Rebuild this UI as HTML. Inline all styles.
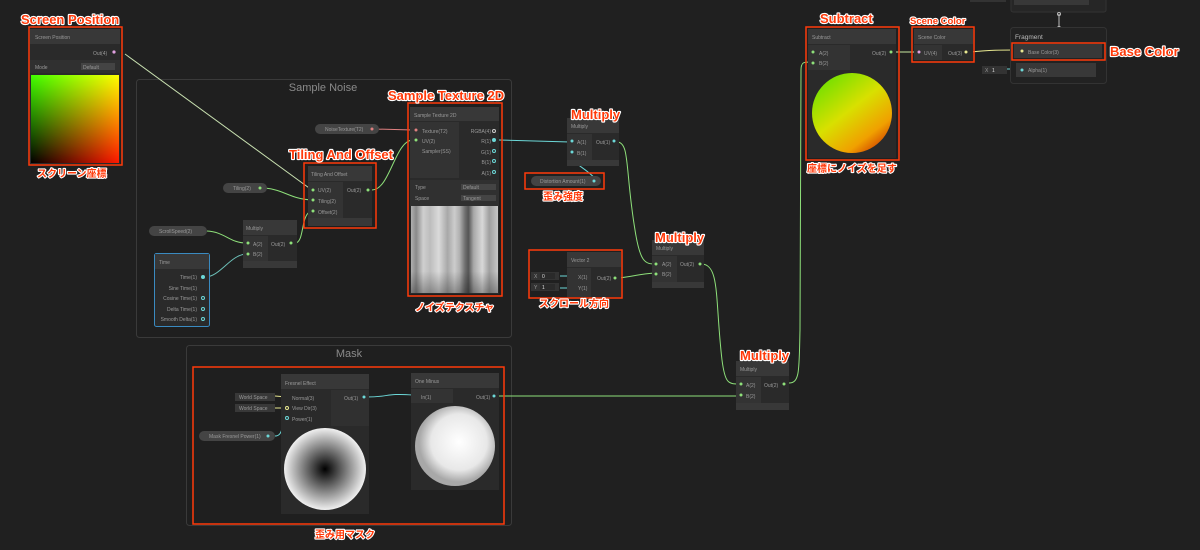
<!DOCTYPE html>
<html><head><meta charset="utf-8"><style>
html,body{margin:0;padding:0;background:#202020;}
svg{display:block}
.t{font-family:"Liberation Sans",sans-serif;font-size:5px;fill:#9a9a9a}
.h{font-family:"Liberation Sans",sans-serif;font-size:5.5px;fill:#aaaaaa}
.lab{font-family:"Liberation Sans","Noto Sans CJK JP",sans-serif;font-weight:bold;fill:#ff3a0a;stroke:#ffffff;stroke-width:2.2px;paint-order:stroke;stroke-linejoin:round}
.g{font-family:"Liberation Sans",sans-serif;font-size:11px;fill:#8a8a8a}
</style></head><body>
<svg width="1200" height="550" viewBox="0 0 1200 550" xmlns="http://www.w3.org/2000/svg">
<defs>
<linearGradient id="spR" x1="0" y1="0" x2="1" y2="0"><stop offset="0" stop-color="#000"/><stop offset="1" stop-color="#ff1800"/></linearGradient>
<linearGradient id="spG" x1="0" y1="0" x2="0" y2="1"><stop offset="0" stop-color="#40ff00"/><stop offset="1" stop-color="#000"/></linearGradient>
<linearGradient id="sub" x1="0.1" y1="0.1" x2="0.8" y2="1"><stop offset="0" stop-color="#70e000"/><stop offset="0.45" stop-color="#d8e000"/><stop offset="0.8" stop-color="#f0a000"/><stop offset="1" stop-color="#d04000"/></linearGradient>
<radialGradient id="fr"><stop offset="0" stop-color="#000"/><stop offset="1" stop-color="#f0f0f0"/></radialGradient>
<radialGradient id="om" cx="0.55" cy="0.45"><stop offset="0" stop-color="#ffffff"/><stop offset="0.7" stop-color="#e8e8e8"/><stop offset="1" stop-color="#a8a8a8"/></radialGradient>
<linearGradient id="nz" x1="0" y1="0" x2="1" y2="0">
<stop offset="0" stop-color="#b0b0b0"/><stop offset="0.06" stop-color="#8a8a8a"/><stop offset="0.14" stop-color="#cfcfcf"/><stop offset="0.22" stop-color="#bdbdbd"/><stop offset="0.32" stop-color="#dadada"/><stop offset="0.42" stop-color="#a8a8a8"/><stop offset="0.5" stop-color="#cccccc"/><stop offset="0.56" stop-color="#b0b0b0"/><stop offset="0.62" stop-color="#707070"/><stop offset="0.66" stop-color="#555"/><stop offset="0.72" stop-color="#a8a8a8"/><stop offset="0.82" stop-color="#d8d8d8"/><stop offset="0.9" stop-color="#a0a0a0"/><stop offset="1" stop-color="#c8c8c8"/></linearGradient>
<linearGradient id="nzv" x1="0" y1="0" x2="0" y2="1"><stop offset="0.75" stop-color="#000" stop-opacity="0"/><stop offset="1" stop-color="#000" stop-opacity="0.3"/></linearGradient>
<linearGradient id="wp" x1="0" x2="1"><stop offset="0" stop-color="#e8b8e8"/><stop offset="1" stop-color="#e8e8b0"/></linearGradient>
</defs>

<!-- groups -->
<rect x="136.5" y="79.5" width="375" height="258" rx="3" fill="#1f1f1f" stroke="#3a3a3a"/>
<text x="323" y="91" class="g" text-anchor="middle">Sample Noise</text>
<rect x="186.5" y="345.5" width="325" height="180" rx="3" fill="#1f1f1f" stroke="#3a3a3a"/>
<text x="349" y="357" class="g" text-anchor="middle">Mask</text>

<!-- top-right partial node -->
<rect x="1011" y="-5" width="95" height="17" rx="2" fill="#262626" stroke="#333"/>
<rect x="1014" y="-3" width="75" height="8" fill="#383838"/>
<rect x="970" y="-3" width="36" height="5" fill="#333"/>
<line x1="1059" y1="14" x2="1059" y2="28" stroke="#bbb" stroke-width="1"/>
<circle cx="1059" cy="14" r="1.5" fill="none" stroke="#bbb"/><circle cx="1059" cy="28" r="1.5" fill="none" stroke="#bbb"/>

<!-- wires -->
<g fill="none" stroke-width="1">
<path d="M118 52 L914 52" stroke="url(#wp)"/>
<path d="M125 54 L305 185 L312 190" stroke="#c8e0b0"/>
<path d="M265 188 C285 190 290 199 312 200" stroke="#8ee07a"/>
<path d="M207 231 C225 232 230 243 246 243" stroke="#8ee07a"/>
<path d="M205 277 C220 277 230 255 246 254" stroke="#6cc0b8"/>
<path d="M295 243 C305 243 300 213 312 211" stroke="#8ee07a"/>
<path d="M372 190 C390 190 395 140 413 140" stroke="#8ee07a"/>
<path d="M374 129 L413 130" stroke="#e08080"/>
<path d="M499 140 L570 142" stroke="#6cd8d8"/>
<path d="M596 180 C590 170 565 160 570 152" stroke="#6cd8d8"/>
<path d="M617 142 C630 142 625 170 635 230 C640 262 645 264 655 264" stroke="#8ee07a"/>
<path d="M619 278 C635 276 640 274 655 273" stroke="#8ee07a"/>
<path d="M702 264 C720 265 715 300 722 360 C725 383 728 384 739 384" stroke="#8ee07a"/>
<path d="M497 396 L739 396" stroke="#8ee07a"/>
<path d="M366 397 C390 397 385 393 413 395" stroke="#6cd8d8"/>
<path d="M789 383 C800 383 799 370 800 330 L801 70 C801 62 804 62 810 62" stroke="#8ee07a"/>
<path d="M894 52 L914 52" stroke="#c8e8a0"/>
<path d="M971 52 C990 50 1000 50 1016 50" stroke="#e8e890"/>
<path d="M1003 69 L1016 69" stroke="#6cd8d8"/>
<path d="M275 396 L287 397 M275 408 L287 408" stroke="#e8e890"/>
<path d="M275 436 C285 436 280 420 287 418" stroke="#6cd8d8"/>
<path d="M560 276 L570 276 M560 288 L570 288" stroke="#6cd8d8"/>
</g>

<!-- Screen Position -->
<rect x="30" y="29" width="90" height="135" fill="#2a2a2a"/>
<rect x="30" y="29" width="90" height="15" fill="#383838"/>
<text x="35" y="39" class="t">Screen Position</text>
<text x="93" y="55" class="t">Out(4)</text><circle cx="114" cy="52" r="1.6" fill="#e0a0e0"/>
<rect x="30" y="60" width="90" height="13" fill="#303030"/>
<text x="35" y="69" class="t">Mode</text><rect x="81" y="63" width="34" height="7" fill="#444"/><text x="83" y="69" class="t">Default</text>
<rect x="31" y="75" width="88" height="88" fill="url(#spR)"/><rect x="31" y="75" width="88" height="88" fill="url(#spG)" style="mix-blend-mode:screen"/>

<!-- pills -->
<g class="t">
<rect x="315" y="124" width="64" height="10" rx="5" fill="#444"/><text x="325" y="131">NoiseTexture(T2)</text><circle cx="372" cy="129" r="1.5" fill="#e08080"/>
<rect x="223" y="183" width="44" height="10" rx="5" fill="#444"/><text x="233" y="190">Tiling(2)</text><circle cx="260" cy="188" r="1.5" fill="#8ee07a"/>
<rect x="149" y="226" width="58" height="10" rx="5" fill="#444"/><text x="159" y="233">ScrollSpeed(2)</text>
<rect x="531" y="176" width="70" height="10" rx="5" fill="#444"/><text x="540" y="183">Distortion Amount(1)</text><circle cx="594" cy="181" r="1.5" fill="#6cd8d8"/>
<rect x="199" y="431" width="76" height="10" rx="5" fill="#444"/><text x="209" y="438">Mask Fresnel Power(1)</text><circle cx="268" cy="436" r="1.5" fill="#6cd8d8"/>
</g>

<!-- Tiling And Offset -->
<rect x="308" y="166" width="64" height="60" fill="#2a2a2a"/>
<rect x="308" y="166" width="64" height="15" fill="#383838"/>
<text x="311" y="176" class="t">Tiling And Offset</text>
<rect x="308" y="182" width="35" height="36" fill="#333"/>
<text x="318" y="192" class="t">UV(2)</text><text x="318" y="203" class="t">Tiling(2)</text><text x="318" y="214" class="t">Offset(2)</text>
<circle cx="313" cy="190" r="1.5" fill="#8ee07a"/><circle cx="313" cy="200" r="1.5" fill="#8ee07a"/><circle cx="313" cy="211" r="1.5" fill="#8ee07a"/>
<text x="347" y="192" class="t">Out(2)</text><circle cx="368" cy="190" r="1.5" fill="#8ee07a"/>
<rect x="308" y="218" width="64" height="8" fill="#383838"/>

<!-- Multiply small -->
<rect x="243" y="220" width="54" height="48" fill="#2a2a2a"/>
<rect x="243" y="220" width="54" height="15" fill="#383838"/><text x="246" y="230" class="t">Multiply</text>
<rect x="243" y="236" width="25" height="25" fill="#333"/>
<text x="253" y="246" class="t">A(2)</text><text x="253" y="256" class="t">B(2)</text>
<circle cx="248" cy="243" r="1.5" fill="#8ee07a"/><circle cx="248" cy="254" r="1.5" fill="#8ee07a"/>
<text x="271" y="246" class="t">Out(2)</text><circle cx="291" cy="243" r="1.5" fill="#8ee07a"/>
<rect x="243" y="261" width="54" height="7" fill="#383838"/>

<!-- Time -->
<rect x="154.5" y="253.5" width="55" height="73" rx="2" fill="#2a2a2a" stroke="#3a8ac0"/>
<rect x="155" y="254" width="54" height="15" fill="#383838"/><text x="159" y="264" class="t">Time</text>
<g class="t" text-anchor="end"><text x="197" y="279">Time(1)</text><text x="197" y="290">Sine Time(1)</text><text x="197" y="300">Cosine Time(1)</text><text x="197" y="311">Delta Time(1)</text><text x="197" y="321">Smooth Delta(1)</text></g>
<g fill="none" stroke="#6cd8d8"><circle cx="203" cy="277" r="1.5" fill="#6cd8d8"/><circle cx="203" cy="298" r="1.5"/><circle cx="203" cy="309" r="1.5"/><circle cx="203" cy="319" r="1.5"/></g>

<!-- Sample Texture 2D -->
<rect x="410" y="107" width="89" height="187" fill="#2a2a2a"/>
<rect x="410" y="107" width="89" height="14" fill="#383838"/><text x="414" y="117" class="t">Sample Texture 2D</text>
<rect x="410" y="122" width="49" height="56" fill="#333"/>
<g class="t"><text x="422" y="133">Texture(T2)</text><text x="422" y="143">UV(2)</text><text x="422" y="153">Sampler(SS)</text></g>
<g class="t" text-anchor="end"><text x="491" y="133">RGBA(4)</text><text x="491" y="143">R(1)</text><text x="491" y="154">G(1)</text><text x="491" y="164">B(1)</text><text x="491" y="175">A(1)</text></g>
<g fill="none" stroke="#6cd8d8"><circle cx="494" cy="131" r="1.5" stroke="#ccc"/><circle cx="494" cy="140" r="1.5" fill="#6cd8d8"/><circle cx="494" cy="151" r="1.5"/><circle cx="494" cy="161" r="1.5"/><circle cx="494" cy="172" r="1.5"/></g>
<circle cx="416" cy="130" r="1.5" fill="#e08080"/><circle cx="416" cy="140" r="1.5" fill="#8ee07a"/>
<rect x="410" y="180" width="89" height="26" fill="#303030"/>
<text x="415" y="189" class="t">Type</text><rect x="461" y="184" width="35" height="6" fill="#444"/><text x="463" y="189" class="t">Default</text>
<text x="415" y="200" class="t">Space</text><rect x="461" y="195" width="35" height="6" fill="#444"/><text x="463" y="200" class="t">Tangent</text>
<rect x="411" y="206" width="87" height="87" fill="url(#nz)"/><rect x="411" y="206" width="87" height="87" fill="url(#nzv)"/>

<!-- Multiply top -->
<rect x="567" y="118" width="52" height="48" fill="#2a2a2a"/>
<rect x="567" y="118" width="52" height="15" fill="#383838"/><text x="571" y="128" class="t">Multiply</text>
<rect x="567" y="134" width="25" height="26" fill="#333"/>
<text x="577" y="144" class="t">A(1)</text><text x="577" y="155" class="t">B(1)</text>
<circle cx="572" cy="141" r="1.5" fill="#6cd8d8"/><circle cx="572" cy="152" r="1.5" fill="#6cd8d8"/>
<text x="596" y="144" class="t">Out(1)</text><circle cx="614" cy="141" r="1.5" fill="#6cd8d8"/>
<rect x="567" y="160" width="52" height="6" fill="#383838"/>

<!-- Vector2 -->
<rect x="567" y="252" width="54" height="45" fill="#2a2a2a"/>
<rect x="567" y="252" width="54" height="15" fill="#383838"/><text x="571" y="262" class="t">Vector 2</text>
<rect x="567" y="268" width="24" height="29" fill="#333"/>
<text x="578" y="279" class="t">X(1)</text><text x="578" y="290" class="t">Y(1)</text>
<text x="597" y="280" class="t">Out(2)</text><circle cx="615" cy="278" r="1.5" fill="#8ee07a"/>
<rect x="531" y="272" width="28" height="8" fill="#333"/><text x="534" y="278" class="t">X</text><rect x="540" y="273" width="15" height="6" fill="#2a2a2a"/><text x="542" y="278" class="t" style="fill:#ddd">0</text>
<rect x="531" y="283" width="28" height="8" fill="#333"/><text x="534" y="289" class="t">Y</text><rect x="540" y="284" width="15" height="6" fill="#2a2a2a"/><text x="542" y="289" class="t" style="fill:#ddd">1</text>

<!-- Multiply mid -->
<rect x="652" y="240" width="52" height="48" fill="#2a2a2a"/>
<rect x="652" y="240" width="52" height="15" fill="#383838"/><text x="656" y="250" class="t">Multiply</text>
<rect x="652" y="256" width="25" height="26" fill="#333"/>
<text x="662" y="266" class="t">A(2)</text><text x="662" y="276" class="t">B(2)</text>
<circle cx="656" cy="264" r="1.5" fill="#8ee07a"/><circle cx="656" cy="274" r="1.5" fill="#8ee07a"/>
<text x="680" y="266" class="t">Out(2)</text><circle cx="700" cy="264" r="1.5" fill="#8ee07a"/>
<rect x="652" y="282" width="52" height="6" fill="#383838"/>

<!-- Multiply bottom -->
<rect x="736" y="361" width="53" height="49" fill="#2a2a2a"/>
<rect x="736" y="361" width="53" height="15" fill="#383838"/><text x="740" y="371" class="t">Multiply</text>
<rect x="736" y="377" width="25" height="26" fill="#333"/>
<text x="746" y="387" class="t">A(2)</text><text x="746" y="398" class="t">B(2)</text>
<circle cx="741" cy="384" r="1.5" fill="#8ee07a"/><circle cx="741" cy="395" r="1.5" fill="#8ee07a"/>
<text x="764" y="387" class="t">Out(2)</text><circle cx="784" cy="384" r="1.5" fill="#8ee07a"/>
<rect x="736" y="403" width="53" height="7" fill="#383838"/>

<!-- Fresnel -->
<rect x="281" y="374" width="88" height="140" fill="#2a2a2a"/>
<rect x="281" y="374" width="88" height="15" fill="#383838"/><text x="285" y="385" class="t">Fresnel Effect</text>
<g class="t"><text x="292" y="400">Normal(3)</text><text x="292" y="410">View Dir(3)</text><text x="292" y="421">Power(1)</text></g>
<rect x="331" y="390" width="38" height="36" fill="#303030"/>
<text x="344" y="400" class="t">Out(1)</text><circle cx="364" cy="397" r="1.5" fill="#6cd8d8"/>
<rect x="235" y="393" width="40" height="8" fill="#383838"/><text x="239" y="399" class="t">World Space</text>
<rect x="235" y="404" width="40" height="8" fill="#383838"/><text x="239" y="410" class="t">World Space</text>
<circle cx="287" cy="408" r="1.5" fill="none" stroke="#e8e890"/><circle cx="287" cy="418" r="1.5" fill="none" stroke="#6cd8d8"/>
<circle cx="325" cy="469" r="41" fill="url(#fr)"/>

<!-- One Minus -->
<rect x="411" y="373" width="88" height="117" fill="#2a2a2a"/>
<rect x="411" y="373" width="88" height="15" fill="#383838"/><text x="415" y="383" class="t">One Minus</text>
<rect x="411" y="389" width="42" height="14" fill="#333"/>
<text x="421" y="399" class="t">In(1)</text><text x="476" y="399" class="t">Out(1)</text><circle cx="494" cy="396" r="1.5" fill="#6cd8d8"/>
<circle cx="455" cy="446" r="40" fill="url(#om)"/>

<!-- Subtract -->
<rect x="808" y="29" width="88" height="129" fill="#2a2a2a"/>
<rect x="808" y="29" width="88" height="15" fill="#383838"/><text x="812" y="39" class="t">Subtract</text>
<rect x="808" y="45" width="42" height="25" fill="#333"/>
<text x="819" y="55" class="t">A(2)</text><text x="819" y="65" class="t">B(2)</text>
<circle cx="813" cy="52" r="1.5" fill="#8ee07a"/><circle cx="813" cy="63" r="1.5" fill="#8ee07a"/>
<text x="872" y="55" class="t">Out(2)</text><circle cx="891" cy="52" r="1.5" fill="#8ee07a"/>
<circle cx="852" cy="113" r="40" fill="url(#sub)"/>

<!-- Scene Color -->
<rect x="914" y="29" width="59" height="31" fill="#2a2a2a"/>
<rect x="914" y="29" width="59" height="15" fill="#383838"/><text x="918" y="39" class="t">Scene Color</text>
<rect x="914" y="45" width="28" height="15" fill="#333"/>
<text x="924" y="55" class="t">UV(4)</text><text x="948" y="55" class="t">Out(3)</text>
<circle cx="919" cy="52" r="1.5" fill="#e0a0e0"/><circle cx="966" cy="52" r="1.5" fill="#e8e890"/>

<!-- Fragment -->
<rect x="1010.5" y="27.5" width="96" height="56" rx="3" fill="#222" stroke="#333"/>
<text x="1015" y="39" style="font-family:'Liberation Sans',sans-serif;font-size:6.5px;fill:#bbb">Fragment</text>
<rect x="1014" y="44" width="88" height="14" fill="#383838"/><text x="1028" y="54" class="t">Base Color(3)</text><circle cx="1022" cy="51" r="1.5" fill="#e8e890"/>
<rect x="1016" y="63" width="80" height="14" fill="#383838"/><text x="1028" y="72" class="t">Alpha(1)</text><circle cx="1022" cy="70" r="1.5" fill="#6cd8d8"/>
<rect x="982" y="66" width="25" height="8" fill="#333"/><text x="985" y="72" class="t">X</text><text x="992" y="72" class="t" style="fill:#ddd">1</text>

<!-- red boxes -->
<g fill="none" stroke="#ff3a0a" stroke-width="1.5">
<rect x="29" y="27" width="93" height="138"/>
<rect x="304" y="163" width="72" height="65"/>
<rect x="408" y="103" width="94" height="193"/>
<rect x="525" y="173" width="79" height="16"/>
<rect x="529" y="250" width="93" height="48"/>
<rect x="193" y="367" width="311" height="157"/>
<rect x="806" y="27" width="93" height="133"/>
<rect x="912" y="27" width="62" height="35"/>
<rect x="1012" y="43" width="93" height="17"/>
</g>

<!-- labels -->
<g class="lab" style="font-size:13px">
<text x="21" y="24">Screen Position</text>
<text x="289" y="159">Tiling And Offset</text>
<text x="388" y="100">Sample Texture 2D</text>
<text x="571" y="119">Multiply</text>
<text x="655" y="242">Multiply</text>
<text x="740" y="360">Multiply</text>
<text x="820" y="23">Subtract</text>
<text x="1110" y="56">Base Color</text>
</g>
<text x="910" y="24" class="lab" style="font-size:9.5px">Scene Color</text>
<g class="lab" style="font-size:10px">
<text x="37" y="177">スクリーン座標</text>
<text x="415" y="311">ノイズテクスチャ</text>
<text x="543" y="200">歪み強度</text>
<text x="539" y="307">スクロール方向</text>
<text x="315" y="538">歪み用マスク</text>
<text x="807" y="172">座標にノイズを足す</text>
</g>
</svg>
</body></html>
